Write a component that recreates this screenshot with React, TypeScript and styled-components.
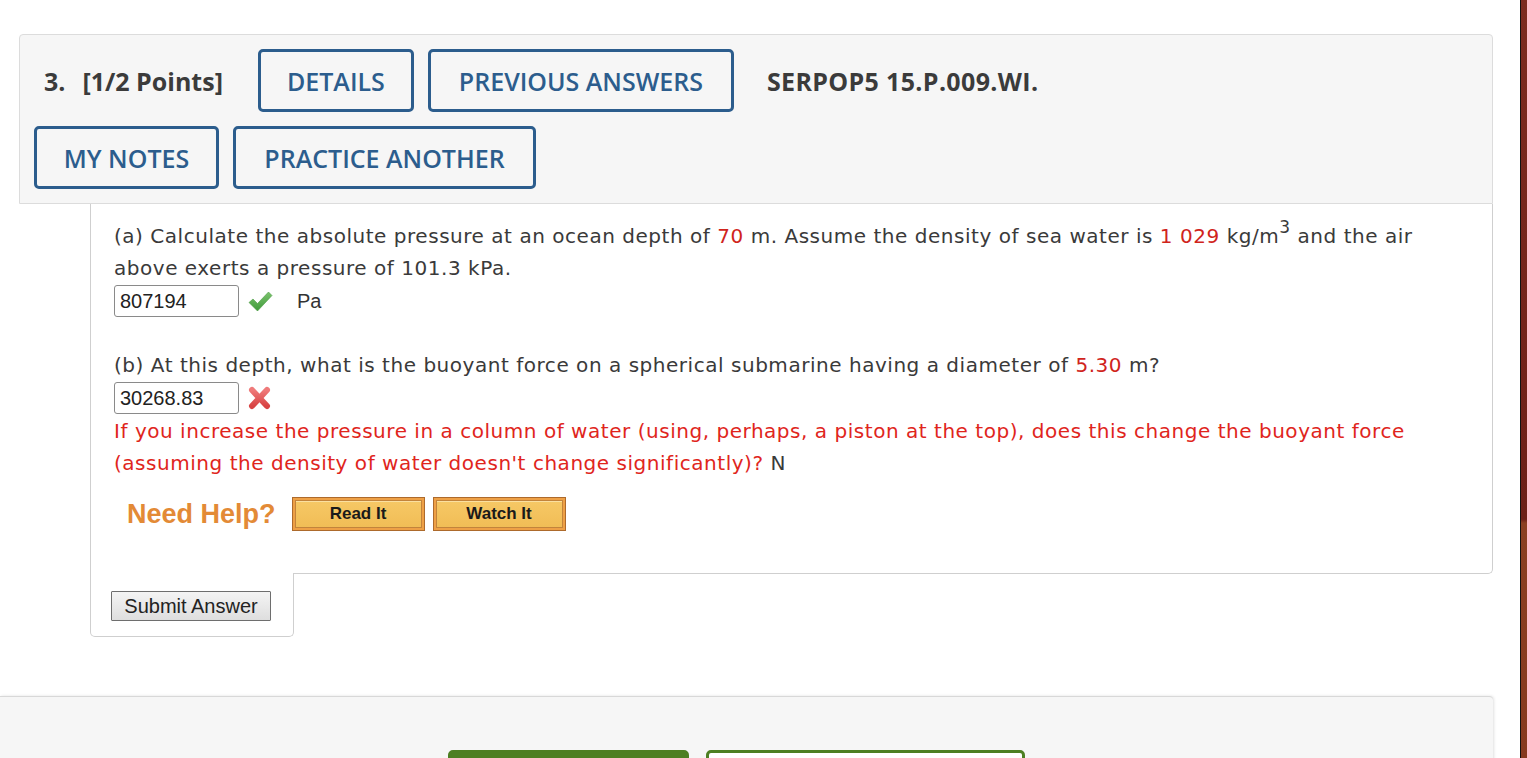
import React from 'react';
import styled, { createGlobalStyle } from 'styled-components';

const GlobalStyle = createGlobalStyle`
  html, body {
    margin: 0;
    padding: 0;
    height: 100%;
    overflow: hidden;
  }
  body {
    background: #ffffff;
    font-family: "DejaVu Sans", Verdana, sans-serif;
  }
`;

const Page = styled.div`
  display: flex;
  width: 1527px;
  height: 758px;
  overflow: hidden;
`;

const Main = styled.div`
  width: 1520px;
  flex: none;
  background: #ffffff;
  padding-top: 34px;
  box-sizing: border-box;
`;

const SideStrip = styled.div`
  flex: 1;
  border-left: 1px solid #111;
  background: linear-gradient(
    180deg,
    #7c2b20 0%,
    #6f2019 60%,
    #6c1f18 68.5%,
    #8a3f22 69%,
    #86391f 100%
  );
`;

const QuestionHeader = styled.div`
  margin-left: 19px;
  width: 1474px;
  box-sizing: border-box;
  background: #f6f6f6;
  border: 1px solid #dcdcdc;
  border-radius: 4px 4px 0 0;
  padding: 14px;
  display: flex;
  flex-direction: column;
  gap: 14px;
  font-family: "Open Sans", "Noto Sans", sans-serif;
`;

const HeaderRow = styled.div`
  display: flex;
  align-items: center;
  gap: 14px;
`;

const PointsLabel = styled.div`
  font-size: 25px;
  font-weight: 700;
  color: #3b3b3b;
  margin: 0 21px 0 10px;
  white-space: nowrap;
`;

const PointsNumber = styled.span`
  margin-right: 17px;
`;

const CodeLabel = styled.div`
  font-size: 25px;
  font-weight: 700;
  color: #3b3b3b;
  margin-left: 19px;
  letter-spacing: 0.35px;
`;

const OutlineButton = styled.button<{ $w: number }>`
  width: ${(p) => p.$w}px;
  height: 63px;
  box-sizing: border-box;
  padding: 0;
  border: 3px solid #2c5d8d;
  border-radius: 5px;
  background: transparent;
  color: #2c5d8d;
  font-family: "Open Sans", "Noto Sans", sans-serif;
  font-size: 25px;
  font-weight: 600;
  cursor: pointer;
`;

const QuestionBody = styled.div`
  margin-left: 90px;
  width: 1403px;
  box-sizing: border-box;
  border: 1px solid #cfcfcf;
  border-top: none;
  border-radius: 0 0 5px 0;
  padding: 16px 22px 42px 23px;
  color: #3a3a3a;
  font-size: 20px;
  letter-spacing: 0.53px;
  line-height: 32px;
`;

const Paragraph = styled.div`
  margin: 0;
`;

const Red = styled.span`
  color: #d0241c;
`;

const Sup = styled.sup`
  font-size: 17px;
  line-height: 0;
  vertical-align: 10px;
`;

const AnswerRow = styled.div`
  display: flex;
  align-items: center;
  height: 32px;
  margin-top: 1px;
  letter-spacing: 0;
`;

const AnswerInput = styled.div`
  width: 125px;
  height: 32px;
  box-sizing: border-box;
  border: 1px solid #8a8a8a;
  border-radius: 3px;
  padding: 0 5px;
  font-family: "Liberation Sans", Arial, sans-serif;
  font-size: 20px;
  line-height: 30px;
  color: #222;
  background: #fff;
`;

const MarkIcon = styled.svg`
  margin-left: 8px;
  flex: none;
`;

const Unit = styled.span`
  margin-left: 24px;
  font-family: "Liberation Sans", Arial, sans-serif;
  font-size: 20px;
  color: #333;
`;

const Spacer = styled.div<{ $h: number }>`
  height: ${(p) => p.$h}px;
`;

const Feedback = styled.div`
  color: #e0251c;
  margin-top: 1px;
`;

const FeedbackTail = styled.span`
  color: #3a3a3a;
`;

const HelpRow = styled.div`
  display: flex;
  align-items: center;
  margin-top: 18px;
  margin-left: 13px;
  gap: 8px;
  letter-spacing: 0;
`;

const HelpLabel = styled.span`
  font-family: "Liberation Sans", Arial, sans-serif;
  font-weight: 700;
  font-size: 27px;
  color: #e38a36;
  margin-right: 8px;
`;

const HelpButton = styled.button`
  width: 133px;
  height: 34px;
  box-sizing: border-box;
  padding: 2px;
  border: 1px solid #ad6a2c;
  background: #eea046;
  cursor: pointer;
  display: flex;
`;

const HelpButtonFace = styled.span`
  flex: 1;
  display: flex;
  align-items: center;
  justify-content: center;
  background: linear-gradient(180deg, #f6c865 0%, #f1bd56 100%);
  border: 1px solid #c3843b;
  box-shadow: inset 0 1px 0 #fbe0a0;
  font-family: "Liberation Sans", Arial, sans-serif;
  font-weight: 700;
  font-size: 17px;
  color: #1a1a1a;
`;

const SubmitTab = styled.div`
  margin-left: 90px;
  width: 204px;
  box-sizing: border-box;
  border: 1px solid #cfcfcf;
  border-top: none;
  border-radius: 0 0 5px 5px;
  padding: 18px 20px 15px 20px;
  margin-top: -1px;
  position: relative;
  background: #fff;
`;

const SubmitButton = styled.button`
  height: 30px;
  width: 160px;
  padding: 0;
  border: 1px solid #6e6e6e;
  border-radius: 1px;
  background: linear-gradient(180deg, #f4f4f4 0%, #dedede 100%);
  font-family: "Liberation Sans", Arial, sans-serif;
  font-size: 20px;
  color: #222;
  cursor: pointer;
`;

const FooterPanel = styled.div`
  margin-top: 59px;
  width: 1493px;
  height: 80px;
  box-sizing: border-box;
  background: #f6f6f6;
  border-top: 1px solid #d8d8d8;
  border-radius: 0 4px 0 0;
  box-shadow: 1px 0 3px rgba(0, 0, 0, 0.12);
  display: flex;
  gap: 17px;
  padding: 53px 0 0 448px;
`;

const FooterButton = styled.div<{ $w: number; $filled?: boolean }>`
  width: ${(p) => p.$w}px;
  height: 40px;
  box-sizing: border-box;
  border: 3px solid #4d7f22;
  border-radius: 5px;
  background: ${(p) => (p.$filled ? '#4d7f22' : '#ffffff')};
`;

const CheckIcon = () => (
  <MarkIcon width="26" height="24" viewBox="0 0 26 24">
    <defs>
      <linearGradient id="chk" x1="0" y1="0" x2="0" y2="1">
        <stop offset="0" stopColor="#7cc36e" />
        <stop offset="1" stopColor="#3f9a3a" />
      </linearGradient>
    </defs>
    <path
      d="M2 13.5 L6 10 L10.5 14.5 L21.5 3 L25 6.5 L10.5 22 Z"
      fill="url(#chk)"
      stroke="#4a9c41"
      strokeWidth="0.6"
      strokeLinejoin="round"
    />
  </MarkIcon>
);

const CrossIcon = () => (
  <MarkIcon width="26" height="24" viewBox="0 0 26 24">
    <defs>
      <linearGradient id="crs" x1="0" y1="0" x2="0" y2="1">
        <stop offset="0" stopColor="#ef7a7a" />
        <stop offset="1" stopColor="#d84444" />
      </linearGradient>
    </defs>
    <g stroke="url(#crs)" strokeWidth="6" strokeLinecap="round">
      <line x1="5" y1="4" x2="20" y2="20" />
      <line x1="20" y1="4" x2="5" y2="20" />
    </g>
  </MarkIcon>
);

const App = () => (
  <>
    <GlobalStyle />
    <Page>
      <Main>
        <QuestionHeader>
          <HeaderRow>
            <PointsLabel>
              <PointsNumber>3.</PointsNumber>[1/2 Points]
            </PointsLabel>
            <OutlineButton $w={156}>DETAILS</OutlineButton>
            <OutlineButton $w={306}>PREVIOUS ANSWERS</OutlineButton>
            <CodeLabel>SERPOP5 15.P.009.WI.</CodeLabel>
          </HeaderRow>
          <HeaderRow>
            <OutlineButton $w={185}>MY NOTES</OutlineButton>
            <OutlineButton $w={303}>PRACTICE ANOTHER</OutlineButton>
          </HeaderRow>
        </QuestionHeader>

        <QuestionBody>
          <Paragraph>
            (a) Calculate the absolute pressure at an ocean depth of <Red>70</Red> m. Assume the density of sea water
            is <Red>1 029</Red> kg/m<Sup>3</Sup> and the air above exerts a pressure of 101.3 kPa.
          </Paragraph>
          <AnswerRow>
            <AnswerInput>807194</AnswerInput>
            <CheckIcon />
            <Unit>Pa</Unit>
          </AnswerRow>
          <Spacer $h={32} />
          <Paragraph>
            (b) At this depth, what is the buoyant force on a spherical submarine having a diameter of <Red>5.30</Red> m?
          </Paragraph>
          <AnswerRow>
            <AnswerInput>30268.83</AnswerInput>
            <CrossIcon />
          </AnswerRow>
          <Feedback>
            If you increase the pressure in a column of water (using, perhaps, a piston at the top), does this change the
            buoyant force (assuming the density of water doesn't change significantly)? <FeedbackTail>N</FeedbackTail>
          </Feedback>
          <HelpRow>
            <HelpLabel>Need Help?</HelpLabel>
            <HelpButton>
              <HelpButtonFace>Read It</HelpButtonFace>
            </HelpButton>
            <HelpButton>
              <HelpButtonFace>Watch It</HelpButtonFace>
            </HelpButton>
          </HelpRow>
        </QuestionBody>

        <SubmitTab>
          <SubmitButton>Submit Answer</SubmitButton>
        </SubmitTab>

        <FooterPanel>
          <FooterButton $w={241} $filled />
          <FooterButton $w={319} />
        </FooterPanel>
      </Main>
      <SideStrip />
    </Page>
  </>
);

export default App;
